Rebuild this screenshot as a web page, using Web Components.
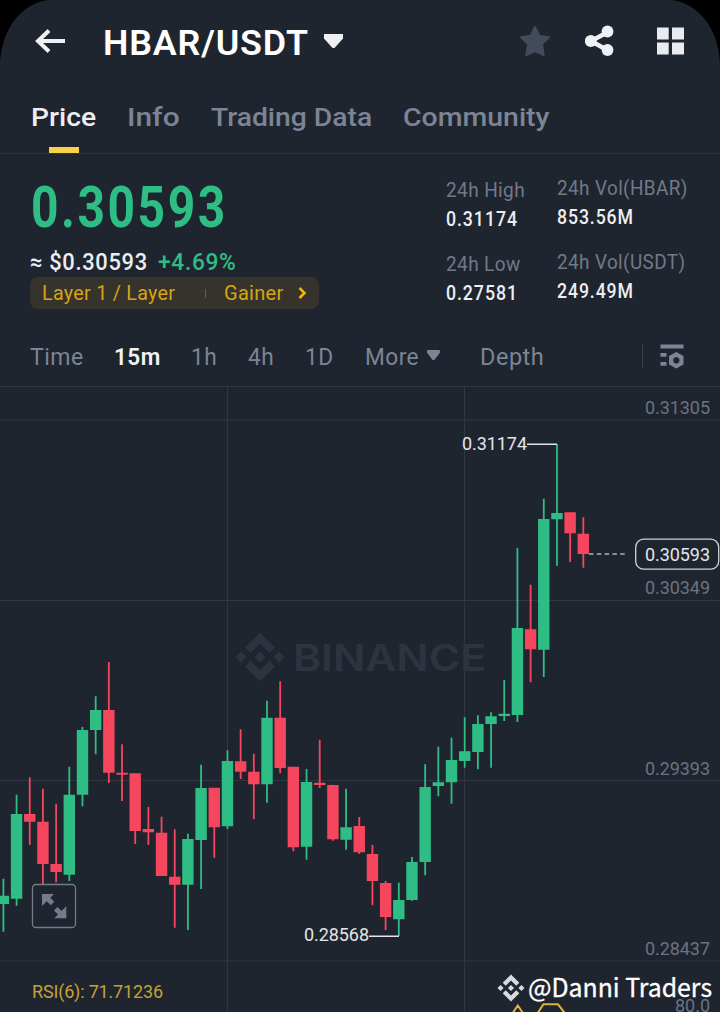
<!DOCTYPE html>
<html lang="en">
<head>
<meta charset="utf-8">
<title>HBAR/USDT</title>
<style>
    body {
        margin: 0;
        background: #000;
        font-family: Roboto, "Liberation Sans", sans-serif;
    }
</style>
</head>
<body>

<template id="tmpl-header">
    <style>
        :host { display: flex; align-items: center; height: 82px; padding: 0 36px 0 35px; }
        svg { display: block; flex: none; }
        .title { margin-left: 37px; color: #fff; font-size: 35px; font-weight: 600; line-height: 78px; padding-top: 6px; }
        .caret { margin-left: 15px; }
        .icons { display: flex; align-items: center; margin-left: auto; }
    </style>
    <svg width="31" height="26" viewBox="0 0 31 26"><path d="M14 2.500 3 13l11 10.500M3 13h27" fill="none" stroke="#eef0f4" stroke-width="4"/></svg>
    <fit-text class="title" width="206" spacing=".8"><slot></slot></fit-text>
    <svg class="caret" width="19" height="16" viewBox="0 0 19 16"><path d="M0 1h19v4.500L10.500 15h-2L0 5.500z" fill="#eef0f4"/></svg>
    <div class="icons">
        <svg width="30" height="32" viewBox="0 0 30 32"><path d="M15 2l4.300 8.800 9.700 1.400-7 6.900 1.700 10.900L15 26.200 6.300 30 8 19.100 1 12.200l9.700-1.400z" fill="#434b5a" stroke="#434b5a" stroke-width="2" stroke-linejoin="round"/></svg>
        <svg style="margin-left:35px" width="29" height="32" viewBox="0 0 29 32"><path d="M23 7 6 16l17 9.500" fill="none" stroke="#eef0f4" stroke-width="4.500"/><g fill="#eef0f4"><circle cx="22.500" cy="6.500" r="5.900"/><circle cx="5.800" cy="16" r="6"/><circle cx="22.500" cy="25" r="5.900"/></g></svg>
        <svg style="margin-left:43px" width="27" height="28" viewBox="0 0 27 28"><path d="M-.3.500h12v12h-12zM15 .5h12v12H15zM-.3 15.500h12v12h-12zM15 15.500h12v12H15z" fill="#e9ebf0"/></svg>
    </div>
</template>

<template id="tmpl-tabs">
    <style>
        :host { display: flex; gap: 31px; height: 71px; padding-left: 31px; border-bottom: 1px solid #2d343f; }
    </style>
    <slot></slot>
</template>

<template id="tmpl-tab">
    <style>
        :host { display: flex; flex-direction: column; align-items: center; justify-content: space-between; color: #7c8495; font-size: 26.500px; font-weight: 500; line-height: 69px; }
        :host([active]) { color: #eceef2; }
        .label { height: 65px; }
        .bar { width: 30px; height: 6px; }
        :host([active]) .bar { background: #f7d148; }
    </style>
    <div class="label"><slot></slot></div>
    <div class="bar"></div>
</template>

<template id="tmpl-summary">
    <style>
        :host { display: flex; justify-content: space-between; height: 172px; padding: 0 30px; box-sizing: border-box; }
        .left { display: flex; flex-direction: column; align-items: flex-start; }
        .price { color: #2ebd85; font-size: 57px; font-weight: 700; line-height: 64px; margin: 22px 0 0 1px; }
        .sub { display: flex; gap: 10px; margin-top: 8px; font-size: 23px; font-weight: 500; line-height: 30px; height: 29px; color: #eceef2; }
        .up { color: #2ebd85; }
        .tag { display: flex; align-items: center; box-sizing: border-box; width: 289px; height: 32px; padding: 0 12px; border-radius: 8px; background: #35332c; color: #d8a313; font-size: 20px; line-height: 32px; }
        .sep { width: 1px; height: 9px; margin: 0 18px 0 30px; background: #725c21; }
        .tag svg { margin-left: auto; }
        .right { display: flex; gap: 32px; width: 244px; }
        .right > div { padding-top: 22px; }
        .right > div + div { padding-top: 20px; }
    </style>
    <div class="left">
        <fit-text class="price" width="197" spacing="3"><slot name="price"></slot></fit-text>
        <div class="sub">
            <fit-text width="118" spacing=".7"><slot name="fiat"></slot></fit-text>
            <fit-text class="up" width="79" spacing=".7"><slot name="change"></slot></fit-text>
        </div>
        <div class="tag">
            <fit-text width="133" spacing=".3">Layer 1 / Layer</fit-text><span class="sep"></span><fit-text width="60" spacing=".3">Gainer</fit-text>
            <svg width="9" height="12" viewBox="0 0 9 12"><path d="M1.500 1l5 5-5 5" fill="none" stroke="#edb414" stroke-width="2.600"/></svg>
        </div>
    </div>
    <div class="right">
        <div><slot name="first"></slot></div>
        <div><slot name="second"></slot></div>
    </div>
</template>

<template id="tmpl-stat">
    <style>
        :host { display: block; height: 74px; color: #eceef2; font-size: 19.500px; font-weight: 500; line-height: 29px; white-space: nowrap; }
        div { height: 29px; }
        .label { color: #727989; font-weight: 400; }
    </style>
    <div class="label"><slot name="label"></slot></div>
    <div><slot></slot></div>
</template>

<template id="tmpl-intervals">
    <style>
        :host { display: flex; align-items: center; height: 60px; padding: 0 36px 0 30px; box-sizing: border-box; color: #7c8495; font-size: 23.500px; line-height: 60px; }
        ::slotted(fit-text) { padding-top: 2px; }
        ::slotted([active]) { color: #f0f2f5; font-weight: 600; }
        .tools { display: flex; align-items: center; gap: 17px; margin-left: auto; }
        .tools span { width: 1px; height: 24px; background: #3a414d; }
    </style>
    <slot></slot>
    <div class="tools">
        <span></span>
        <svg width="24" height="25" viewBox="0 0 24 25" fill="#7c8495">
            <path d="M.5.500h23v4H.5zM.5 9H6.500v3.800H.5zM.5 18H6.500v3.800H.5z"/>
            <path fill-rule="evenodd" d="M16.300 8 23.500 12v8.500L16.300 24.500 9 20.500V12zM16.300 13.100a3.200 3.200 0 1 0 .01 0z"/>
        </svg>
    </div>
</template>

<template id="tmpl-chart">
    <style>
        :host { display: block; position: relative; height: 626px; }
        svg { display: block; }
        text { font-size: 18px; }
        .grid { stroke: #303742; stroke-width: 1; }
        .axis { fill: #6c7280; }
        .mark { fill: #e2e5ea; }
        .leader { stroke: #e2e5ea; stroke-width: 1.500; }
        .brand { font-family: Inter, sans-serif; font-size: 37px; font-weight: 600; fill: #2e343f; }
        .credit { font-family: "Noto Sans CJK SC", sans-serif; font-size: 25px; fill: #fff; stroke: #fff; stroke-width: .3; }
    </style>
    <svg width="720" height="626" viewBox="0 386 720 626">
        <defs>
            <path id="logo" d="M-24.600-10.100 0-34.700l24.600 24.600 14.300-14.300L0-63.300l-38.900 38.900zM-63.300 0l14.300-14.300L-34.700 0-49 14.300zM-24.600 10.100 0 34.700l24.600-24.600 14.300 14.300L0 63.300l-38.900-38.900zM34.700 0 49-14.300 63.300 0 49 14.300zM14.500 0 0-14.500-14.500 0 0 14.500z"/>
        </defs>
        <path class="grid" d="M0 386.500h720M0 420h720M0 600.500h720M0 780.500h720M0 961h720M227.500 386v626M464.500 386v626"/>
        <use href="#logo" transform="translate(260 657) scale(.385)" fill="#2e343f"/>
        <text class="brand" x="293" y="671" textLength="193" lengthAdjust="spacingAndGlyphs">BINANCE</text>
        <g id="candles"></g>
        <path class="leader" d="M527 444.300h30M369 936.200h30"/>
        <text class="mark" x="462" y="450" textLength="65">0.31174</text>
        <text class="mark" x="304" y="941" textLength="65">0.28568</text>
        <path d="M589 554h36" stroke="#aeb3bc" stroke-width="1.300" stroke-dasharray="4.500 3.300"/>
        <g class="axis">
            <text x="645" y="414" textLength="65">0.31305</text>
            <text x="645" y="594" textLength="65">0.30349</text>
            <text x="645" y="775" textLength="65">0.29393</text>
            <text x="645" y="955" textLength="65">0.28437</text>
            <text x="675" y="1012" textLength="35">80.0</text>
        </g>
        <rect x="635.700" y="539.200" width="83" height="30" rx="8" fill="#1f252f" stroke="#cdd1d8" stroke-width="1.300"/>
        <text class="mark" x="645" y="560.500" textLength="65">0.30593</text>
        <g fill="none" stroke="#747c8c" stroke-width="1.300">
            <rect x="32.500" y="884.500" width="43" height="43" rx="3.500" fill="#1f252f"/>
            <path fill="#747c8c" stroke="none" d="M42 894h12l-3.700 3.700 4 4-3.500 3.500-4-4L42 906zM66.300 918.300h-12l3.700-3.700-4-4 3.500-3.500 4 4 4.800-4.800z"/>
        </g>
        <text x="32" y="998" textLength="131" fill="#c6a035">RSI(6): 71.71236</text>
        <path d="M512 1014l5.800-8.500 5.800 8.500M537 1014l6.500-9.700h14.500l7.500 9.700" fill="none" stroke="#d9b340" stroke-width="2"/>
        <use href="#logo" transform="translate(511 988) scale(.213)" fill="#d9dade"/>
        <text class="credit" x="528" y="997" textLength="184" lengthAdjust="spacingAndGlyphs">@Danni Traders</text>
    </svg>
</template>

<template id="tmpl-screen">
    <style>
        :host { display: block; width: 720px; height: 1012px; overflow: hidden; background: #1f252f; border-radius: 52px 52px 0 0 / 66px 66px 0 0; }
    </style>
    <slot></slot>
</template>

<market-screen>
    <pair-header>HBAR/USDT</pair-header>
    <tab-bar>
        <tab-item active><fit-text width="65" spacing="0">Price</fit-text></tab-item>
        <tab-item><fit-text width="53" spacing="0">Info</fit-text></tab-item>
        <tab-item><fit-text width="161" spacing="0">Trading Data</fit-text></tab-item>
        <tab-item><fit-text width="147" spacing="0">Community</fit-text></tab-item>
    </tab-bar>
    <price-summary>
        <span slot="price">0.30593</span>
        <span slot="fiat">≈ $0.30593</span>
        <span slot="change">+4.69%</span>
        <stat-item slot="first"><fit-text slot="label" width="79" spacing=".4">24h High</fit-text><fit-text width="72" spacing="1">0.31174</fit-text></stat-item>
        <stat-item slot="first"><fit-text slot="label" width="75" spacing=".4">24h Low</fit-text><fit-text width="72" spacing="1">0.27581</fit-text></stat-item>
        <stat-item slot="second"><fit-text slot="label" width="131" spacing=".4">24h Vol(HBAR)</fit-text><fit-text width="77" spacing="1">853.56M</fit-text></stat-item>
        <stat-item slot="second"><fit-text slot="label" width="128" spacing=".4">24h Vol(USDT)</fit-text><fit-text width="77" spacing="1">249.49M</fit-text></stat-item>
    </price-summary>
    <interval-bar>
        <fit-text width="54" spacing=".5">Time</fit-text>
        <fit-text active width="47" spacing=".5" style="margin-left:30px">15m</fit-text>
        <fit-text width="26" spacing=".5" style="margin-left:30px">1h</fit-text>
        <fit-text width="26" spacing=".5" style="margin-left:31px">4h</fit-text>
        <fit-text width="29" spacing=".5" style="margin-left:31px">1D</fit-text>
        <fit-text width="54" spacing=".5" style="margin-left:31px">More</fit-text>
        <svg width="13" height="10" viewBox="0 0 14 11" style="margin:-2px 0 0 8px"><path d="M0 0h14v3L8 11H6L0 3z" fill="#7c8495"/></svg>
        <fit-text width="64" spacing=".5" style="margin-left:40px">Depth</fit-text>
    </interval-bar>
    <candle-chart></candle-chart>
</market-screen>

<script>
"use strict";

// attach an open shadow root filled from a template
function define(name, id) {
    customElements.define(name, class extends HTMLElement {
        connectedCallback() {
            this.attachShadow({mode: "open"}).append(document.getElementById(id).content.cloneNode(true));
        }
    });
}

// text stretched or squeezed to a given width
customElements.define("fit-text", class extends HTMLElement {
    connectedCallback() {
        this.attachShadow({mode: "open"}).innerHTML = `
            <style>
            :host { display: inline-block; flex: none; vertical-align: top; white-space: nowrap; }
            span { display: inline-block; transform-origin: 0 50%; }
            </style>
            <span><slot></slot></span>
        `;
        const span = this.shadowRoot.querySelector("span");
        this.style.width = this.getAttribute("width") + "px";
        span.style.letterSpacing = (this.getAttribute("spacing") || 0) + "px";
    }

    fit() {
        const span = this.shadowRoot.querySelector("span");
        span.style.transform = `scaleX(${Number(this.getAttribute("width")) / span.offsetWidth})`;
    }
});

define("market-screen", "tmpl-screen");
define("pair-header", "tmpl-header");
define("tab-bar", "tmpl-tabs");
define("tab-item", "tmpl-tab");
define("stat-item", "tmpl-stat");
define("price-summary", "tmpl-summary");
define("interval-bar", "tmpl-intervals");

// [up, high, low, body top, body bottom]
const candles = [
    [1, 878.7, 931.7, 895.7, 904], [1, 794.7, 905.7, 814, 898.7], [0, 777.3, 845, 814, 821.7],
    [0, 788.7, 890, 821.7, 864], [0, 803.7, 882.3, 864, 872], [1, 766.7, 881, 794.7, 874.7],
    [1, 727, 806.3, 730, 794.7], [1, 696.3, 754.3, 710, 730], [0, 662, 783, 710, 772.7],
    [0, 744.3, 801, 772.8, 774.8], [0, 773.3, 844, 773.3, 831], [0, 807, 845, 829, 832.3],
    [0, 816.7, 876, 832.7, 876], [0, 829.3, 927.7, 876.7, 884.7], [1, 833.7, 930, 839, 884.7],
    [1, 764.7, 889, 788, 840], [0, 788, 857.7, 787.7, 827.3], [1, 750.3, 829, 761, 826.3],
    [0, 729.3, 779, 761.3, 771.7], [0, 753.7, 819, 771.7, 784.3], [1, 700.7, 802.7, 717.7, 784.3],
    [0, 681.3, 773.3, 717.7, 768], [0, 766.7, 851.3, 766.7, 847.3], [1, 769, 859.7, 782, 846.7],
    [0, 739.7, 788, 782.7, 785], [0, 784.7, 840.7, 785, 839.3], [1, 788.7, 849.7, 827.3, 839.7],
    [0, 817, 854, 826, 852.3], [0, 845, 905.3, 854, 881], [0, 881, 930, 883, 917],
    [1, 882.7, 936, 900, 919.3], [1, 857, 900.7, 862, 900], [1, 764.3, 875.3, 787, 862],
    [1, 746.7, 796.3, 782.3, 786], [1, 737.7, 803.7, 760, 782.3], [1, 717.3, 767.7, 751.3, 761],
    [1, 715.3, 769.3, 724, 752], [1, 712.3, 767.7, 716.3, 724], [1, 680, 721, 713.7, 716],
    [1, 548, 722, 628, 715], [0, 584.7, 682.3, 629.3, 649.3], [1, 498.7, 677, 519, 649.7],
    [1, 444, 565.7, 513, 519.3], [0, 512.3, 562, 512.3, 533.3], [0, 517.3, 567.7, 533.7, 554]
];

customElements.define("candle-chart", class extends HTMLElement {
    connectedCallback() {
        this.attachShadow({mode: "open"}).append(document.getElementById("tmpl-chart").content.cloneNode(true));
        this.shadowRoot.getElementById("candles").innerHTML = candles.map(([up, high, low, top, bottom], i) => {
            const x = 3.4 + i * 13.18;
            return `<path fill="${up ? "#2ebd85" : "#f6465d"}" d="M${x - .9} ${high}h1.800V${low}h-1.800zM${x - 5.7} ${top}h11.400V${bottom}h-11.400z"/>`;
        }).join("");
    }
});

// the widths depend on the fonts of the parents, so measure when everything is defined
function fitAll(root) {
    for (const el of root.querySelectorAll("*")) {
        if (el.localName === "fit-text") {
            el.fit();
        } else if (el.shadowRoot) {
            fitAll(el.shadowRoot);
        }
    }
}
fitAll(document);
</script>
</body>
</html>
